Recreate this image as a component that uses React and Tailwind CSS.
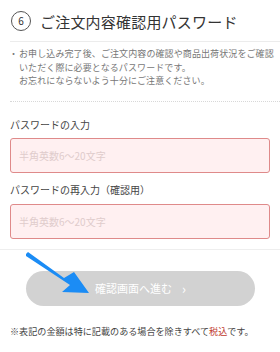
import React from 'react';

export default function App() {
  return (
    <div
      className="relative w-[280px] h-[352px] overflow-hidden bg-white text-[#333]"
      style={{ fontFamily: '"Noto Sans CJK JP", "Noto Sans", sans-serif' }}
    >
      {/* 見出し */}
      <div className="flex items-center h-[41px] pl-[11px] pt-[1px]">
        <div className="flex items-center justify-center w-[20px] h-[20px] rounded-full border border-[#555] text-[10px] leading-none text-[#333]">
          6
        </div>
        <h1 className="ml-[9px] text-[15px] leading-none tracking-[0.2px] text-[#333]">
          ご注文内容確認用パスワード
        </h1>
      </div>
      <div className="ml-[10px] border-t border-[#ececec]" />

      {/* 説明 */}
      <div className="flex pl-[9px] pt-[5px] text-[9px] tracking-[0.1px] leading-[13.5px] text-[#777] whitespace-nowrap">
        <span className="w-[10px] shrink-0">・</span>
        <p>
          お申し込み完了後、ご注文内容の確認や商品出荷状況をご確認
          <br />
          いただく際に必要となるパスワードです。
          <br />
          お忘れにならないよう十分にご注意ください。
        </p>
      </div>
      <div className="ml-[10px] mt-[13px] border-t border-dotted border-[#d8d8d8]" />

      {/* フォーム */}
      <div className="px-[10px] pt-[16px]">
        <label className="block text-[10px] leading-[14px] text-[#444]">パスワードの入力</label>
        <input
          type="password"
          placeholder="半角英数6〜20文字"
          className="mt-[6px] block w-[260px] h-[35px] px-[8px] rounded-[3px] border border-[#df8a8a] bg-[#fff0f1] text-[10px] placeholder:text-[#e0cccc] outline-none"
        />
        <label className="block mt-[10px] text-[10px] leading-[14px] text-[#444]">
          パスワードの再入力（確認用）
        </label>
        <input
          type="password"
          placeholder="半角英数6〜20文字"
          className="mt-[7px] block w-[260px] h-[35px] px-[8px] rounded-[3px] border border-[#df8a8a] bg-[#fff0f1] text-[10px] placeholder:text-[#e0cccc] outline-none"
        />
      </div>
      <div className="mt-[10px] border-t border-[#eeeeee]" />

      {/* ボタン */}
      <div className="pt-[21px] pl-[26px]">
        <button className="flex items-center justify-center gap-[10px] w-[229px] h-[35px] rounded-full bg-[#d2d2d2] text-white text-[11px]">
          <span>確認画面へ進む</span>
          <span className="text-[13px] leading-none">›</span>
        </button>
      </div>

      <p className="pl-[10px] pt-[19px] text-[9.1px] leading-[13px] text-[#444]">
        ※表記の金額は特に記載のある場合を除きすべて<span className="text-[#c0392b]">税込</span>です。
      </p>

      {/* 青い矢印 */}
      <svg className="absolute left-0 top-[248px]" width="100" height="50" viewBox="0 0 100 50">
        <path
          d="M26 6 L28 4 L64 30 L74 24 L89 45 L62 44 L70 37 L26 8 Z"
          fill="#1b8cf5"
        />
      </svg>
    </div>
  );
}
